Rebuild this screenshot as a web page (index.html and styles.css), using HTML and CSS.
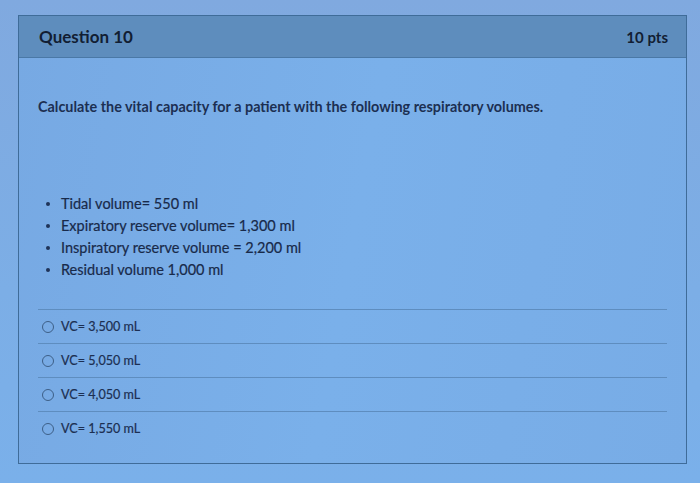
FILE: index.html
```html
<!DOCTYPE html>
<html>
<head>
<meta charset="utf-8">
<link rel="stylesheet" href="styles.css">
</head>
<body>
<div class="card">
  <div class="card-header">
    <span class="title">Question 10</span>
    <span class="pts">10 pts</span>
  </div>
  <div class="card-body">
    <p class="question">Calculate the vital capacity for a patient with the following respiratory volumes.</p>
    <ul class="volumes">
      <li>Tidal volume= 550 ml</li>
      <li>Expiratory reserve volume= 1,300 ml</li>
      <li>Inspiratory reserve volume = 2,200 ml</li>
      <li>Residual volume 1,000 ml</li>
    </ul>
    <div class="answers">
      <label class="answer"><span class="radio"></span>VC= 3,500 mL</label>
      <label class="answer"><span class="radio"></span>VC= 5,050 mL</label>
      <label class="answer"><span class="radio"></span>VC= 4,050 mL</label>
      <label class="answer"><span class="radio"></span>VC= 1,550 mL</label>
    </div>
  </div>
</div>
</body>
</html>
```
FILE: styles.css
```css
html, body {
  margin: 0;
  padding: 0;
}
body {
  width: 700px;
  height: 483px;
  overflow: hidden;
  background: linear-gradient(180deg, #80a9df 0%, #7caee6 60%, #7ab0ea 100%);
  font-family: Lato, "Open Sans", sans-serif;
  color: #1b2a48;
  padding: 15px 0 0 18px;
  box-sizing: border-box;
}
.card {
  width: 669px;
  height: 449px;
  box-sizing: border-box;
  border: 1px solid #3f6c99;
  background: linear-gradient(100deg, #77a9e3 0%, #7ab0ea 50%, #78ace6 100%);
}
.card-header {
  height: 42px;
  box-sizing: border-box;
  display: flex;
  align-items: center;
  justify-content: space-between;
  padding: 0 18px 0 20px;
  background: #5e8dbd;
  border-bottom: 1px solid #4a78a6;
}
.title {
  font-size: 17px;
  font-weight: 700;
  color: #121e33;
}
.pts {
  font-size: 15px;
  font-weight: 700;
  color: #121e33;
}
.card-body {
  padding: 39px 19px 0 19px;
}
.question {
  margin: 0;
  font-size: 14.4px;
  line-height: 20px;
  font-weight: 700;
  color: #1c2f52;
}
.volumes {
  margin: 76px 0 0 0;
  padding: 0 0 0 23px;
  list-style: none;
}
.volumes li {
  position: relative;
  font-size: 14.5px;
  line-height: 22px;
  color: #182a4a;
  -webkit-text-stroke: 0.2px #182a4a;
}
.volumes li::before {
  content: "";
  position: absolute;
  left: -15px;
  top: 9px;
  width: 4px;
  height: 4px;
  border-radius: 50%;
  background: #1f3358;
}
.answers {
  margin-top: 28px;
}
.answer {
  display: flex;
  align-items: center;
  height: 34px;
  box-sizing: border-box;
  border-top: 1px solid #5e8dbf;
  font-size: 12.6px;
  color: #1c2f52;
  -webkit-text-stroke: 0.2px #1c2f52;
  padding-left: 4px;
}
.radio {
  width: 10px;
  height: 10px;
  border: 1px solid #3d5f87;
  border-radius: 50%;
  margin-right: 7px;
  background: transparent;
}
```
